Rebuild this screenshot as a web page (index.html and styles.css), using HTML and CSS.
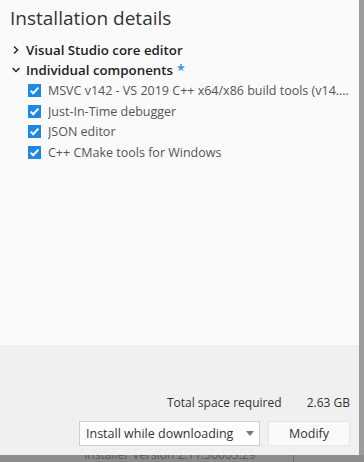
FILE: index.html
```html
<!DOCTYPE html>
<html lang="en">
<head>
  <meta charset="UTF-8">
  <meta name="viewport" content="width=device-width, initial-scale=1.0">
  <title>Installation details</title>
  <link rel="stylesheet" href="styles.css">
</head>
<body>
  <div class="window">
    <div class="dialog">
      <div class="details">
        <h1>Installation details</h1>

        <div class="group">
          <svg class="chevron" width="8" height="8" viewBox="0 0 8 8">
            <path d="M2 0.6 L5.6 4 L2 7.4" fill="none" stroke="#222" stroke-width="1.4"/>
          </svg>
          <span>Visual Studio core editor</span>
        </div>

        <div class="group">
          <svg class="chevron" width="8" height="8" viewBox="0 0 8 8">
            <path d="M0.6 2 L4 5.6 L7.4 2" fill="none" stroke="#222" stroke-width="1.4"/>
          </svg>
          <span>Individual components</span>
          <span class="star">*</span>
        </div>

        <ul class="components">
          <li>
            <span class="check"><svg width="13" height="13" viewBox="0 0 13 13"><path d="M2.6 6.6 L5.2 9.2 L10.4 3.6" fill="none" stroke="#fff" stroke-width="2"/></svg></span>
            <span class="label">MSVC v142 - VS 2019 C++ x64/x86 build tools (v14.24)</span>
          </li>
          <li>
            <span class="check"><svg width="13" height="13" viewBox="0 0 13 13"><path d="M2.6 6.6 L5.2 9.2 L10.4 3.6" fill="none" stroke="#fff" stroke-width="2"/></svg></span>
            <span class="label">Just-In-Time debugger</span>
          </li>
          <li>
            <span class="check"><svg width="13" height="13" viewBox="0 0 13 13"><path d="M2.6 6.6 L5.2 9.2 L10.4 3.6" fill="none" stroke="#fff" stroke-width="2"/></svg></span>
            <span class="label">JSON editor</span>
          </li>
          <li>
            <span class="check"><svg width="13" height="13" viewBox="0 0 13 13"><path d="M2.6 6.6 L5.2 9.2 L10.4 3.6" fill="none" stroke="#fff" stroke-width="2"/></svg></span>
            <span class="label">C++ CMake tools for Windows</span>
          </li>
        </ul>
      </div>

      <div class="footer">
        <div class="space">
          <span>Total space required</span>
          <span class="size">2.63 GB</span>
        </div>
        <div class="actions">
          <div class="select">
            <span>Install while downloading</span>
            <svg width="8" height="5" viewBox="0 0 8 5"><path d="M0 0 H8 L4 5 Z" fill="#777"/></svg>
          </div>
          <button class="modify">Modify</button>
        </div>
      </div>
    </div>
    <div class="edge"></div>
  </div>
  <div class="status">
    <span class="version">Installer Version 2.11.30003.29</span>
    <span class="divider"></span>
  </div>
</body>
</html>
```

FILE: styles.css
```css
body {
  margin: 0;
  font-family: "Open Sans", "Noto Sans", sans-serif;
  background: #8c8c8c;
  overflow: hidden;
}

.window {
  display: flex;
  height: 455px;
}

.dialog {
  width: 359px;
  display: flex;
  flex-direction: column;
}

.edge {
  flex: 1;
  background: #9b9b9b;
}

.details {
  background: #fafafa;
  height: 345px;
  padding: 5px 0 0 10px;
  box-sizing: border-box;
}

.details h1 {
  margin: 0 0 9px;
  font-size: 19px;
  font-weight: 400;
  color: #333;
  line-height: 26px;
}

.group {
  display: flex;
  align-items: center;
  height: 20px;
  line-height: 20px;
  font-size: 13.3px;
  font-weight: 600;
  color: #222;
}

.chevron {
  margin: 0 6px 0 2px;
}

.star {
  color: #1e90dc;
  margin-left: 4px;
  font-size: 14px;
  line-height: 20px;
}

.components {
  list-style: none;
  margin: 0;
  padding: 0 0 0 18px;
}

.components li {
  display: flex;
  align-items: center;
  height: 20.7px;
  font-size: 12.5px;
  color: #555;
}

.check {
  width: 13px;
  height: 13px;
  background: #1e88e5;
  display: flex;
  margin-right: 7px;
  flex-shrink: 0;
}

.label {
  width: 303px;
  white-space: nowrap;
  overflow: hidden;
  text-overflow: ellipsis;
}

.footer {
  flex: 1;
  background: #f0f0f0;
  padding: 48px 9px 0 0;
  display: flex;
  flex-direction: column;
  align-items: flex-end;
}

.space {
  font-size: 12px;
  color: #333;
  height: 20px;
  line-height: 20px;
}

.size {
  margin-left: 22px;
}

.actions {
  display: flex;
  gap: 8px;
  margin-top: 8px;
}

.select {
  width: 181px;
  height: 25px;
  box-sizing: border-box;
  border: 1px solid #cfcfcf;
  background: #fff;
  display: flex;
  align-items: center;
  justify-content: space-between;
  padding: 0 5px 0 6px;
  font-size: 12.5px;
  color: #333;
}

.modify {
  width: 82px;
  height: 25px;
  border: 1px solid #e6e6e6;
  background: #fafafa;
  font-family: inherit;
  font-size: 12.5px;
  color: #333;
  padding: 0;
}

.status {
  height: 7px;
  position: relative;
  overflow: hidden;
  background: #8c8c8c;
}

.version {
  position: absolute;
  left: 84px;
  top: -7px;
  font-size: 12px;
  color: #5a5a5a;
  line-height: 14px;
}

.divider {
  position: absolute;
  left: 293px;
  top: 0;
  width: 1px;
  height: 7px;
  background: #6e6e6e;
}
```
